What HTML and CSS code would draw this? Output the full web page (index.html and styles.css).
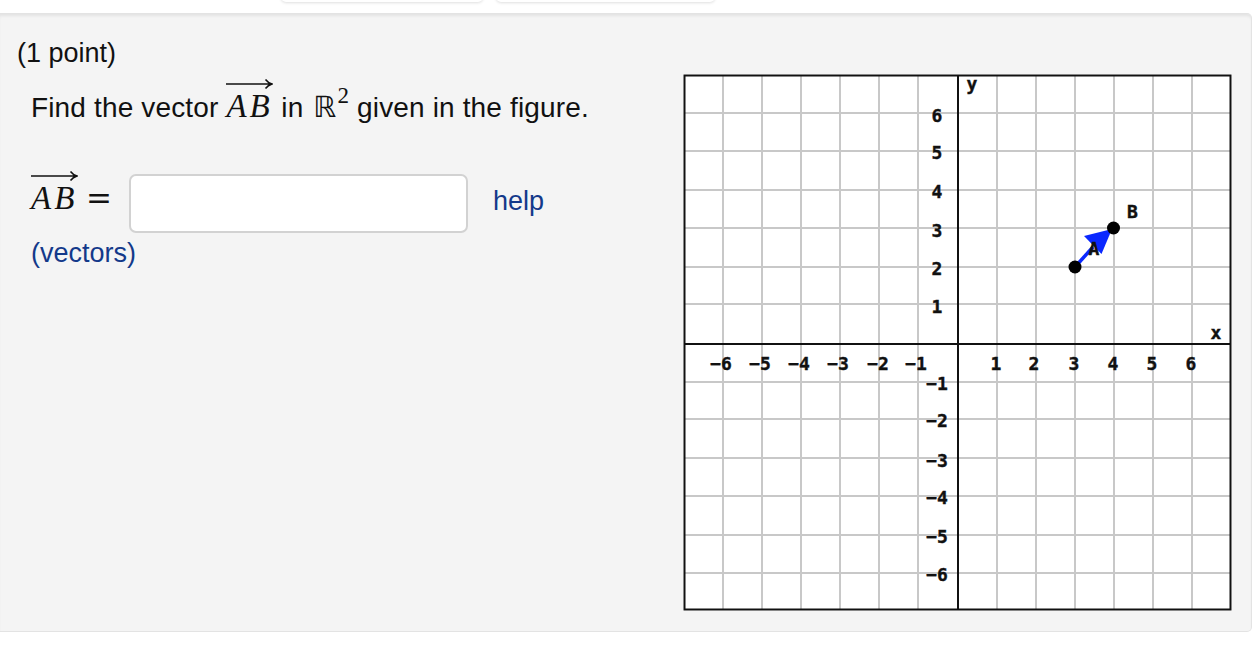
FILE: index.html
```html
<!DOCTYPE html>
<html lang="en">
<head>
<meta charset="utf-8">
<title>Vector AB</title>
<link rel="stylesheet" href="styles.css">
</head>
<body>
<div class="tabs"><div class="tab tab-a"></div><div class="tab tab-b"></div></div>
<div class="panel">
  <div class="points">(1 point)</div>
  <div class="problem">
    <div class="text">
      <p class="q">Find the vector <span class="vec"><svg class="arrow" width="47" height="12" viewBox="0 0 47 12"><path d="M0 6H45.5M39.5 1.5Q42 4.8 46 6Q42 7.2 39.5 10.5" fill="none" stroke="#111" stroke-width="1.5"/></svg><span class="ab">AB</span></span> in <span class="bbr">ℝ</span><span class="sup">2</span> given in the figure.</p>
      <div class="answer">
        <span class="math"><span class="vec"><svg class="arrow" width="47" height="12" viewBox="0 0 47 12"><path d="M0 6H45.5M39.5 1.5Q42 4.8 46 6Q42 7.2 39.5 10.5" fill="none" stroke="#111" stroke-width="1.5"/></svg><span class="ab">AB</span></span><span class="eq">=</span></span>
        <input class="field" type="text" aria-label="AB">
        <a class="link help" href="#">help</a>
      </div>
      <a class="link vectors" href="#">(vectors)</a>
    </div>
    <svg class="graph" width="549" height="537" viewBox="0 0 549 537">
      <rect x="0" y="0" width="549" height="537" fill="#fff"/>
      <path d="M40 2V535M79 2V535M118 2V535M157 2V535M196 2V535M235 2V535M314 2V535M353 2V535M392 2V535M431 2V535M470 2V535M509 2V535M2 39H547M2 77H547M2 116H547M2 154H547M2 193H547M2 230H547M2 308H547M2 345H547M2 384H547M2 422H547M2 461H547M2 499H547" stroke="#c8c8c8" stroke-width="2" fill="none"/>
      <path d="M275 2V535M2 270H547" stroke="#111" stroke-width="2" fill="none"/>
      <rect x="1.5" y="1.5" width="546" height="534" fill="none" stroke="#111" stroke-width="2"/>
      <g class="lbl" text-anchor="middle">
        <text x="254" y="48">6</text>
        <text x="254" y="85">5</text>
        <text x="254" y="124">4</text>
        <text x="254" y="163">3</text>
        <text x="254" y="201">2</text>
        <text x="254" y="239">1</text>
        <text x="254" y="316">−1</text>
        <text x="254" y="353">−2</text>
        <text x="254" y="393">−3</text>
        <text x="254" y="430">−4</text>
        <text x="254" y="469">−5</text>
        <text x="254" y="507">−6</text>
        <text x="38" y="296">−6</text>
        <text x="77" y="296">−5</text>
        <text x="116" y="296">−4</text>
        <text x="155" y="296">−3</text>
        <text x="195" y="296">−2</text>
        <text x="233" y="296">−1</text>
        <text x="313" y="296">1</text>
        <text x="351" y="296">2</text>
        <text x="391" y="296">3</text>
        <text x="430" y="296">4</text>
        <text x="469" y="296">5</text>
        <text x="508" y="296">6</text>
        <text x="289" y="16">y</text>
        <text x="533" y="265">x</text>
      </g>
      <path d="M392 193L410 173" stroke="#0a28ff" stroke-width="3.5" fill="none"/>
      <path d="M429 155L401 162L418.5 180Z" fill="#0a28ff"/>
      <circle cx="392" cy="193" r="6.5" fill="#000"/>
      <circle cx="430.5" cy="154" r="6.5" fill="#000"/>
      <g class="lbl" text-anchor="middle">
        <text x="411" y="181">A</text>
        <text x="449.5" y="144">B</text>
      </g>
    </svg>
  </div>
</div>
</body>
</html>
```

FILE: styles.css
```css
html, body {
  margin: 0;
  padding: 0;
  background: #ffffff;
}

body {
  font-family: "Liberation Sans", Arial, Helvetica, sans-serif;
  color: #111;
}

.tabs {
  display: flex;
  gap: 13px;
  height: 13px;
  padding-left: 281px;
}

.tab {
  height: 12px;
  margin-top: -10px;
  background: #fff;
  border-radius: 0 0 5px 5px;
  box-shadow: 0 1px 3px rgba(0, 0, 0, 0.13);
}

.tab-a { width: 202px; }
.tab-b { width: 219px; }

.panel {
  box-sizing: border-box;
  width: 1252px;
  height: 619px;
  background: #f4f4f4;
  border: 1px solid #e3e3e3;
  border-left: none;
  border-radius: 0 5px 5px 0;
  box-shadow: inset 0 3px 3px -1px rgba(0, 0, 0, 0.07);
  padding: 24px 19px 0 17px;
}

.points {
  font-size: 27px;
  line-height: 31px;
}

.problem {
  display: flex;
  justify-content: space-between;
  align-items: flex-start;
  margin-top: 5px;
}

.text {
  padding-left: 14px;
  font-size: 27px;
  line-height: 31px;
}

.q {
  margin: 4px 0 0;
  white-space: nowrap;
  font-size: 28px;
  letter-spacing: 0.15px;
}

.vec {
  display: inline-block;
  vertical-align: baseline;
  letter-spacing: 0;
}

.arrow {
  display: block;
}

.ab {
  display: block;
  font-family: "Liberation Serif", "Times New Roman", serif;
  font-style: italic;
  font-size: 33px;
  line-height: 33px;
  letter-spacing: 3px;
}

.bbr {
  font-family: "DejaVu Sans", sans-serif;
  font-size: 29px;
  margin-left: 2px;
}

.sup {
  font-family: "Liberation Serif", "Times New Roman", serif;
  font-size: 23px;
  vertical-align: 14px;
  margin-left: 1px;
}

.answer {
  display: flex;
  align-items: flex-start;
  margin-top: 47px;
}

.math {
  font-family: "Liberation Serif", "Times New Roman", serif;
  font-size: 33px;
  line-height: 33px;
}

.eq {
  font-family: "DejaVu Serif", serif;
  font-size: 31px;
  margin-left: 8px;
}

.field {
  box-sizing: border-box;
  width: 339px;
  height: 59px;
  margin: 4px 0 0 17px;
  background: #fff;
  border: 2px solid #d2d2d2;
  border-radius: 7px;
  outline: none;
  padding: 0 8px;
  font: inherit;
}

.link {
  color: #13398a;
  text-decoration: none;
}

.help {
  margin: 16px 0 0 25px;
  font-size: 27px;
  line-height: 31px;
}

.vectors {
  display: block;
  width: max-content;
  margin-top: 5px;
}

.graph {
  display: block;
  flex: none;
}

.lbl {
  font-family: "DejaVu Sans Mono", monospace;
  font-weight: bold;
  font-size: 18px;
  fill: #111;
  stroke: #111;
  stroke-width: 0.4px;
}
```
